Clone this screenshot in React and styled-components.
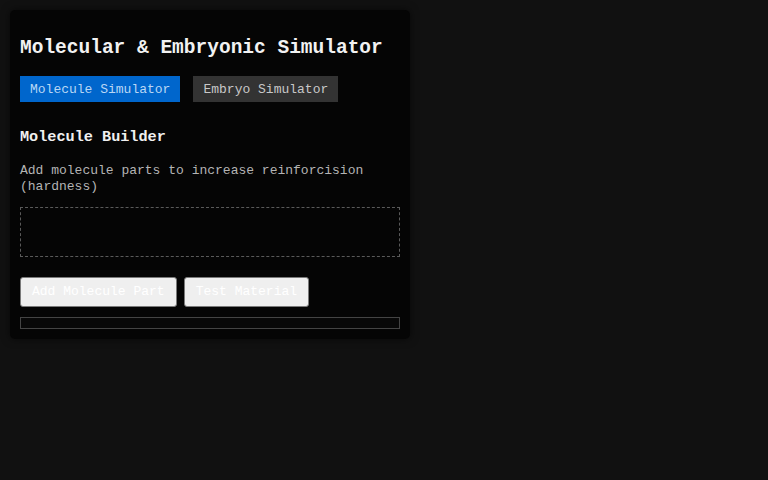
import React, { useState } from "react";
import styled, { createGlobalStyle } from "styled-components";

const Global = createGlobalStyle`
  html, body { margin: 0; padding: 0; background: #111111; }
  body {
    padding: 10px;
    font-family: "Courier New", "Nimbus Mono PS", "FreeMono", "Liberation Mono", monospace;
    font-size: 13px;
    color: #e6e6e6;
  }
  * { box-sizing: border-box; }
`;

const Card = styled.div`
  width: 400px;
  background: #050505;
  border-radius: 5px;
  padding: 10px;
  box-shadow: 0 0 8px rgba(0, 0, 0, 0.6);
  display: flex;
  flex-direction: column;
`;

const Title = styled.h1`
  margin: 17px 0 17px;
  font-size: 19.5px;
  line-height: 22px;
  font-weight: bold;
  color: #f2f2f2;
`;

const Tabs = styled.div`
  display: flex;
  gap: 13px;
`;

const Tab = styled.button`
  font-family: inherit;
  font-size: 13px;
  line-height: 16px;
  padding: 6px 10px 4px;
  border: none;
  border-radius: 0;
  background: ${(p) => (p.$active ? "#0066cc" : "#333333")};
  color: ${(p) => (p.$active ? "#b9d7f5" : "#c8c8c8")};
  cursor: pointer;
`;

const Section = styled.h3`
  margin: 27px 0 0;
  font-size: 15.2px;
  line-height: 17px;
  font-weight: bold;
  color: #f0f0f0;
`;

const Desc = styled.p`
  margin: 17px 0 0;
  font-size: 13px;
  line-height: 16px;
  color: #b4b4b4;
`;

const DropZone = styled.div`
  margin-top: 12px;
  height: 50px;
  border: 1px dashed #5a5a5a;
`;

const Actions = styled.div`
  display: flex;
  gap: 7px;
  margin-top: 20px;
`;

const ActionButton = styled.button`
  font-family: inherit;
  font-size: 13px;
  line-height: 16px;
  height: 30px;
  padding: 0 11px;
  background: #efefef;
  color: #ffffff;
  border: 1px solid #7a7a7a;
  border-radius: 3px;
`;

const Meter = styled.div`
  margin-top: 10px;
  height: 12px;
  border: 1px solid #444444;
  background: #080808;
`;

export default function App() {
  const [tab, setTab] = useState("molecule");
  return (
    <>
      <Global />
      <Card>
        <Title>Molecular &amp; Embryonic Simulator</Title>
        <Tabs>
          <Tab $active={tab === "molecule"} onClick={() => setTab("molecule")}>
            Molecule Simulator
          </Tab>
          <Tab $active={tab === "embryo"} onClick={() => setTab("embryo")}>
            Embryo Simulator
          </Tab>
        </Tabs>
        <Section>Molecule Builder</Section>
        <Desc>Add molecule parts to increase reinforcision (hardness)</Desc>
        <DropZone />
        <Actions>
          <ActionButton>Add Molecule Part</ActionButton>
          <ActionButton>Test Material</ActionButton>
        </Actions>
        <Meter />
      </Card>
    </>
  );
}
